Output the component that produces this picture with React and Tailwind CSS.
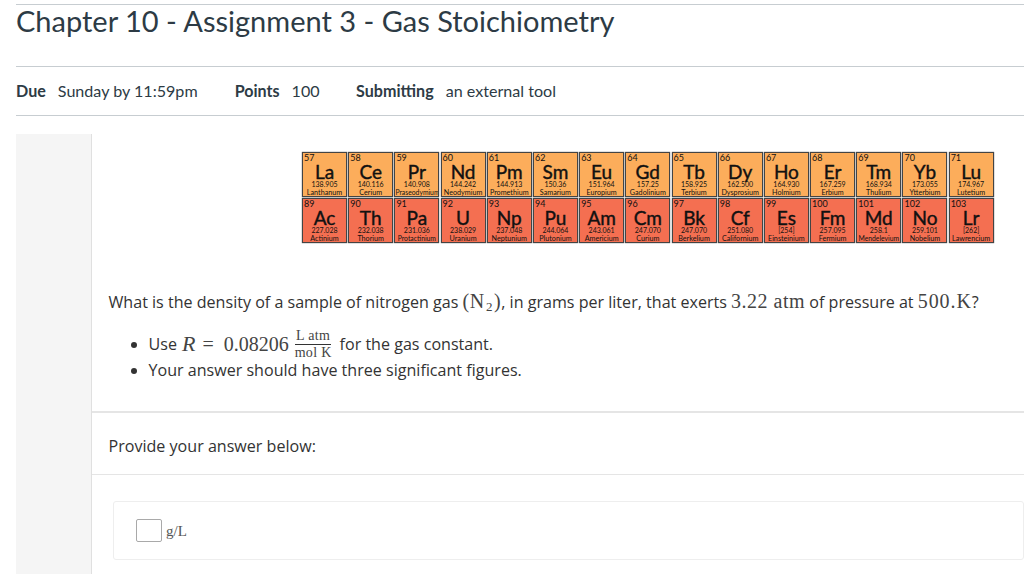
const LANTHANIDES = [
  [57, "La", "138.905", "Lanthanum"],
  [58, "Ce", "140.116", "Cerium"],
  [59, "Pr", "140.908", "Praseodymium"],
  [60, "Nd", "144.242", "Neodymium"],
  [61, "Pm", "144.913", "Promethium"],
  [62, "Sm", "150.36", "Samarium"],
  [63, "Eu", "151.964", "Europium"],
  [64, "Gd", "157.25", "Gadolinium"],
  [65, "Tb", "158.925", "Terbium"],
  [66, "Dy", "162.500", "Dysprosium"],
  [67, "Ho", "164.930", "Holmium"],
  [68, "Er", "167.259", "Erbium"],
  [69, "Tm", "168.934", "Thulium"],
  [70, "Yb", "173.055", "Ytterbium"],
  [71, "Lu", "174.967", "Lutetium"],
];

const ACTINIDES = [
  [89, "Ac", "227.028", "Actinium"],
  [90, "Th", "232.038", "Thorium"],
  [91, "Pa", "231.036", "Protactinium"],
  [92, "U", "238.029", "Uranium"],
  [93, "Np", "237.048", "Neptunium"],
  [94, "Pu", "244.064", "Plutonium"],
  [95, "Am", "243.061", "Americium"],
  [96, "Cm", "247.070", "Curium"],
  [97, "Bk", "247.070", "Berkelium"],
  [98, "Cf", "251.080", "Californium"],
  [99, "Es", "[254]", "Einsteinium"],
  [100, "Fm", "257.095", "Fermium"],
  [101, "Md", "258.1", "Mendelevium"],
  [102, "No", "259.101", "Nobelium"],
  [103, "Lr", "[262]", "Lawrencium"],
];

function Cell({ el, color }) {
  const [num, sym, weight, name] = el;
  const long = name === "Praseodymium" || name === "Mendelevium" || name === "Protactinium";
  return (
    <div className={`h-[45px] border border-[#444] shadow-[0_0_1px_#444] text-center text-[#111] overflow-hidden ${color}`}>
      <div className="text-left text-[9px] leading-[8px] pl-[1px] mt-px">{num}</div>
      <div className="text-[19px] leading-[18px] mt-px [-webkit-text-stroke:0.4px_#111]">{sym}</div>
      <div className="text-[7px] leading-[7px]">{weight}</div>
      <div className={`leading-[7px] mt-px whitespace-nowrap ${long ? "text-[6.8px]" : "text-[7.2px]"}`}>{name}</div>
    </div>
  );
}

function Row({ items, color }) {
  return (
    <div className="grid grid-cols-[repeat(15,45px)] gap-x-[1.2px]">
      {items.map((el) => (
        <Cell key={el[0]} el={el} color={color} />
      ))}
    </div>
  );
}

const serif = "font-['Liberation_Serif',serif]";

export default function App() {
  return (
    <div className="h-[574px] w-[1024px] overflow-hidden bg-white font-['Open_Sans',sans-serif] text-[#333]">
      <div className="pl-4 pt-1">
        <div className="border-t border-[#c7cdd1] h-[62px] font-['Lato',sans-serif]">
          <h1 className="text-[29px] leading-[32px] text-[#2d3b45]">Chapter 10 - Assignment 3 - Gas Stoichiometry</h1>
        </div>
        <div className="flex items-center h-[50px] border-y border-[#c7cdd1] font-['Lato',sans-serif] text-[16.1px] text-[#2d3b45]">
          <span className="font-bold">Due</span>
          <span className="ml-3">Sunday by 11:59pm</span>
          <span className="font-bold ml-[37px]">Points</span>
          <span className="ml-3">100</span>
          <span className="font-bold ml-[36.5px]">Submitting</span>
          <span className="ml-3">an external tool</span>
        </div>
        <div className="mt-[18px] flex h-[440px]">
          <div className="w-[76px] shrink-0 bg-[#f5f5f5] border-r border-[#e0e0e0]" />
          <div className="flex-1 min-w-0">
            <div className="pt-[18px] pl-[210px] font-['Lato',sans-serif] flex flex-col gap-y-[1px]">
              <Row items={LANTHANIDES} color="bg-[#fcad5b]" />
              <Row items={ACTINIDES} color="bg-[#f46f51]" />
            </div>
            <div className="h-[168px] pl-[16.5px] pt-[46px] text-[16.08px] leading-[24px]">
              <p className="whitespace-nowrap">
                What is the density of a sample of nitrogen gas{" "}
                <span className={`${serif} text-[20px] tracking-[0.6px] text-[#444]`}>
                  (N<sub className="text-[13px] mx-px">2</sub>)
                </span>
                , in grams per liter, that exerts{" "}
                <span className={`${serif} text-[20px] tracking-[0.5px] text-[#444]`}>3.22 atm</span> of pressure at{" "}
                <span className={`${serif} text-[20px] tracking-[0.9px] text-[#444]`}>500.K</span>?
              </p>
              <ul className="list-disc pl-10 mt-4">
                <li>
                  <span className="flex items-center h-[28px]">
                    Use
                    <span className={`${serif} text-[20px] whitespace-nowrap ml-[5px] text-[#444]`}>
                      <i className="text-[22px]">R</i>
                      <span className="ml-[7px] mr-[10px]">=</span>
                      0.08206
                    </span>
                    <span className={`${serif} inline-flex flex-col items-center ml-[6px] mr-[8px] text-[14px] leading-[16px] tracking-[0.3px] text-[#444]`}>
                      <span className="border-b border-[#333] px-px">L atm</span>
                      <span>mol K</span>
                    </span>
                    for the gas constant.
                  </span>
                </li>
                <li>Your answer should have three significant figures.</li>
              </ul>
            </div>
            <div className="border-t-2 border-[#e5e5e5] h-[63px] pl-[16.5px] pt-[21px] text-[16.08px] leading-[24px]">
              Provide your answer below:
            </div>
            <div className="border-t border-[#e5e5e5] pt-[26px] pl-[21px]">
              <div className="flex items-center h-[59px] border border-[#eeeeee] rounded-[3px] pl-[22px]">
                <div className="h-[23px] w-[26px] border border-[#a9a9a9] rounded-[2px]" />
                <span className={`${serif} ml-[4px] mt-[2px] text-[15px] text-[#555]`}>g/L</span>
              </div>
            </div>
          </div>
        </div>
      </div>
    </div>
  );
}
